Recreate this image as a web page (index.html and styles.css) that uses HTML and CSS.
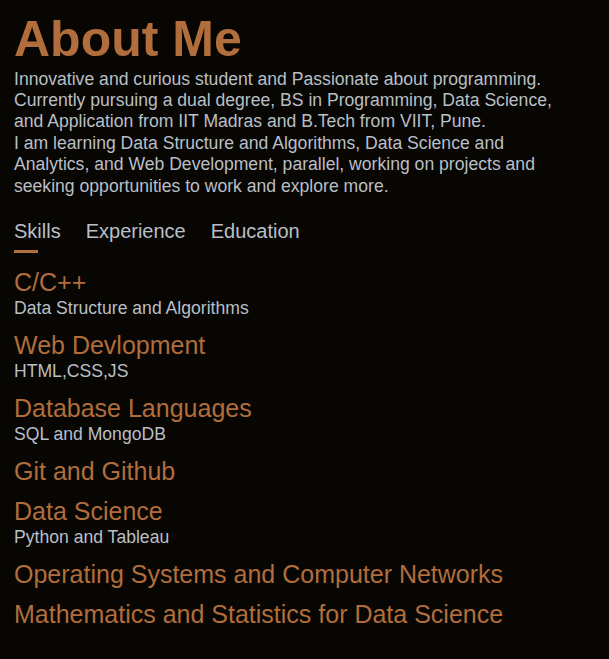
FILE: index.html
```html
<!DOCTYPE html>
<html lang="en">
<head>
<meta charset="utf-8">
<title>About Me</title>
<link rel="stylesheet" href="styles.css">
</head>
<body>
<main class="about">
  <h1 class="about-title">About Me</h1>
  <p class="about-text">Innovative and curious student and Passionate about programming. Currently pursuing a dual degree, BS in Programming, Data Science, and Application from IIT Madras and B.Tech from VIIT, Pune.<br>I am learning Data Structure and Algorithms, Data Science and Analytics, and Web Development, parallel, working on projects and seeking opportunities to work and explore more.</p>
  <nav class="tabs">
    <span class="tab active">Skills</span>
    <span class="tab">Experience</span>
    <span class="tab">Education</span>
  </nav>
  <ul class="skills">
    <li class="skill"><span class="skill-name">C/C++</span><span class="skill-sub">Data Structure and Algorithms</span></li>
    <li class="skill"><span class="skill-name">Web Devlopment</span><span class="skill-sub">HTML,CSS,JS</span></li>
    <li class="skill"><span class="skill-name">Database Languages</span><span class="skill-sub">SQL and MongoDB</span></li>
    <li class="skill"><span class="skill-name">Git and Github</span></li>
    <li class="skill"><span class="skill-name">Data Science</span><span class="skill-sub">Python and Tableau</span></li>
    <li class="skill"><span class="skill-name">Operating Systems and Computer Networks</span></li>
    <li class="skill"><span class="skill-name">Mathematics and Statistics for Data Science</span></li>
  </ul>
</main>
</body>
</html>
```
FILE: styles.css
```css
html, body {
  margin: 0;
  padding: 0;
  background: #080602;
}
body {
  font-family: "Liberation Sans", Arial, sans-serif;
  color: #b9bfc6;
  min-height: 659px;
}
.about {
  padding: 14px 35px 0 14px;
  width: 560px;
}
.about-title {
  margin: 0;
  font-size: 50px;
  line-height: 50px;
  font-weight: bold;
  color: #b16d3b;
}
.about-text {
  margin: 4.5px 0 0;
  font-size: 17.6px;
  line-height: 21.4px;
}
.tabs {
  display: flex;
  gap: 25px;
  margin-top: 23px;
}
.tab {
  font-size: 20px;
  line-height: 23px;
  padding-bottom: 7px;
  position: relative;
}
.tab.active::after {
  content: "";
  position: absolute;
  left: 0;
  bottom: -3px;
  width: 24px;
  height: 3px;
  background: #b16d3b;
}
.skills {
  list-style: none;
  margin: 18px 0 0;
  padding: 0;
  display: flex;
  flex-direction: column;
  gap: 12px;
}
.skill {
  display: flex;
  flex-direction: column;
}
.skill-name {
  font-size: 25px;
  line-height: 28px;
  color: #b16d3b;
}
.skill-sub {
  margin-top: 1px;
  font-size: 17.6px;
  line-height: 22px;
}
```
